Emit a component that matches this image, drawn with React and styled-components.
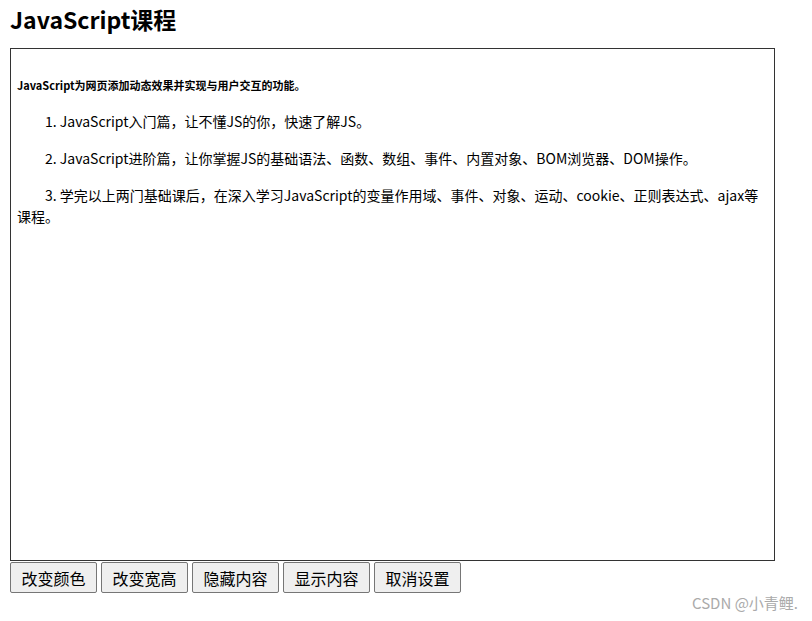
import React from 'react';
import styled, { createGlobalStyle } from 'styled-components';

const Global = createGlobalStyle`
  body {
    margin: 8px 10px;
    font-family: "Microsoft YaHei", "Noto Sans CJK SC", sans-serif;
    color: #000;
    background: #fff;
  }
`;

const Title = styled.h2`
  font-size: 23px;
  font-weight: bold;
  margin: 0 0 18px;
  line-height: 22px;
`;

const Box = styled.div`
  width: 751px;
  height: 511px;
  border: 1px solid #333;
  padding: 0 6px;
  font-size: 14px;
`;

const Lead = styled.h6`
  font-size: 11px;
  font-weight: bold;
  margin: 28px 0 18px;
`;

const Para = styled.p`
  text-indent: 2em;
  line-height: 21px;
  margin: 0 0 16px;
`;

const Bar = styled.div`
  display: flex;
  gap: 4px;
  margin-top: 1px;
`;

const Btn = styled.button`
  width: 87px;
  height: 31px;
  font-size: 16px;
  font-family: inherit;
  background: #efefef;
  border: 1px solid #767676;
  border-radius: 2px;
  padding: 0;
`;

const Mark = styled.div`
  position: absolute;
  right: 14px;
  top: 592px;
  font-size: 15px;
  color: #aaa;
`;

export default function App() {
  return (
    <>
      <Global />
      <Title>JavaScript课程</Title>
      <Box>
        <Lead>JavaScript为网页添加动态效果并实现与用户交互的功能。</Lead>
        <Para>1. JavaScript入门篇，让不懂JS的你，快速了解JS。</Para>
        <Para>2. JavaScript进阶篇，让你掌握JS的基础语法、函数、数组、事件、内置对象、BOM浏览器、DOM操作。</Para>
        <Para>3. 学完以上两门基础课后，在深入学习JavaScript的变量作用域、事件、对象、运动、cookie、正则表达式、ajax等课程。</Para>
      </Box>
      <Bar>
        {['改变颜色', '改变宽高', '隐藏内容', '显示内容', '取消设置'].map(t => <Btn key={t}>{t}</Btn>)}
      </Bar>
      <Mark>CSDN @小青鲤.</Mark>
    </>
  );
}
